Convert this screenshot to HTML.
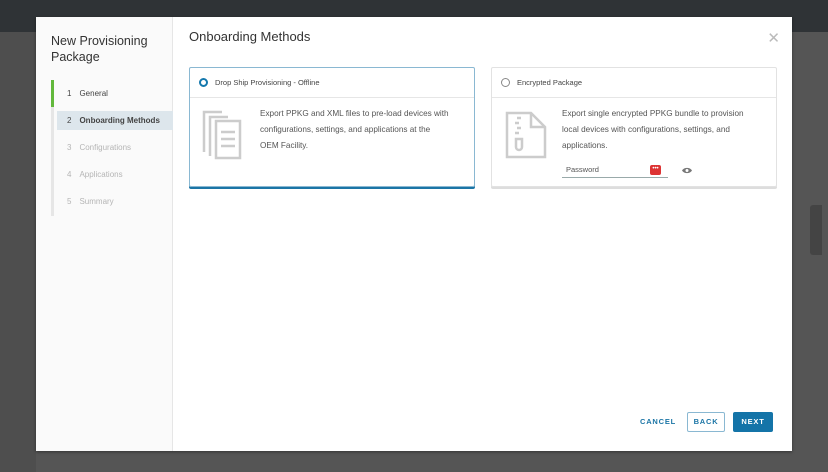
<!DOCTYPE html>
<html><head><style>
*{box-sizing:border-box;margin:0;padding:0}
body{width:828px;height:472px;overflow:hidden;background:#555;font-family:"Liberation Sans",sans-serif;position:relative}
.top{position:absolute;left:0;top:0;width:828px;height:32px;background:#2f3336}
.side{position:absolute;left:0;top:32px;width:36px;height:440px;background:#4e4e4e}
.modal{position:absolute;left:36px;top:17px;width:756px;height:434px;background:#fff;box-shadow:0 1px 3px rgba(0,0,0,.4)}
.left{position:absolute;left:0;top:0;width:137px;height:434px;background:#fafafa;border-right:1px solid #e6e6e6}
.title{position:absolute;left:15px;top:16px;font-size:12.5px;line-height:16px;color:#333}
.track{position:absolute;left:15px;top:63px;width:3px;height:136px;background:#e6e6e6}
.track i{display:block;width:3px;height:27px;background:#62b83c}
.step{position:absolute;left:21px;width:116px;height:19px;font-size:8px;line-height:19px;color:#444;padding-left:10px}
.step b{font-weight:normal;margin-right:8px}
.dim{color:#b5b5b5}
h2{position:absolute;left:153px;top:12px;font-size:13px;font-weight:normal;color:#333}
.x{position:absolute;right:12px;top:12px;font-size:15px;color:#bbb}
.card{position:absolute;top:50px;width:286px;height:120px;border:1px solid #e2e2e2;border-radius:2px;box-shadow:0 2px 0 #ddd}
.card.sel{border-color:#8ab8d2;box-shadow:0 2px 0 #1b75a6}
.hd{height:30px;border-bottom:1px solid #e6e6e6;font-size:7.5px;color:#444;line-height:29px;padding-left:25px;position:relative}
.rad{position:absolute;left:9px;top:10px;width:9px;height:9px;border-radius:50%;border:1px solid #888}
.sel .rad{border:2.5px solid #1478ad;background:#fff}
.txt{position:absolute;left:70px;top:38px;font-size:8.2px;line-height:16px;color:#555;white-space:nowrap}
.btn{position:absolute;top:395px;height:20px;font-size:7.5px;font-weight:bold;letter-spacing:.8px;line-height:20px;text-align:center;color:#1b75a6;border-radius:2px}
</style></head><body>
<div class="top"></div><div class="side"></div>
<div style="position:absolute;right:6px;top:205px;width:12px;height:50px;background:#444;border-radius:3px 0 0 3px"></div>
<div class="modal">
 <div class="left">
  <div class="title">New Provisioning<br>Package</div>
  <div class="track"><i></i></div>
  <div class="step" style="top:67px"><b>1</b>General</div>
  <div class="step" style="top:94px;background:#dde6ec;font-weight:bold"><b>2</b>Onboarding Methods</div>
  <div class="step dim" style="top:121px"><b>3</b>Configurations</div>
  <div class="step dim" style="top:148px"><b>4</b>Applications</div>
  <div class="step dim" style="top:175px"><b>5</b>Summary</div>
 </div>
 <h2>Onboarding Methods</h2>
 <div class="x">✕</div>
 <div class="card sel" style="left:153px">
  <div class="hd"><span class="rad"></span>Drop Ship Provisioning - Offline</div>
  <svg style="position:absolute;left:12px;top:42px" width="44" height="50" viewBox="0 0 44 50" fill="none" stroke="#ccc" stroke-width="2.5">
   <path d="M2 42V2h18"/><path d="M8 46V7h18"/><path d="M14 11h24v37H14z"/><path d="M19 22h14M19 29h14M19 36h14"/></svg>
  <div class="txt">Export PPKG and XML files to pre-load devices with<br>configurations, settings, and applications at the<br>OEM Facility.</div>
 </div>
 <div class="card" style="left:455px">
  <div class="hd"><span class="rad"></span>Encrypted Package</div>
  <svg style="position:absolute;left:12px;top:42px" width="44" height="50" viewBox="0 0 44 50" fill="none" stroke="#ccc" stroke-width="2.5">
   <path d="M3 3h24l14 14v30H3z"/><path d="M27 3v14h14"/><path d="M13 8h4M11 13h4M13 18h4M11 23h4" stroke-width="2.5"/><path d="M12 29h6v8a3 3 0 0 1-6 0z"/></svg>
  <div class="txt">Export single encrypted PPKG bundle to provision<br>local devices with configurations, settings, and<br>applications.</div>
  <div style="position:absolute;left:70px;top:97px;width:106px;height:13px;border-bottom:1px solid #9aa;font-size:7.5px;color:#555;padding-left:4px">Password</div>
  <div style="position:absolute;left:158px;top:97px;width:11px;height:10px;background:#d33;border-radius:2px;color:#fff;font-size:6px;line-height:9px;text-align:center">•••</div>
  <svg style="position:absolute;left:190px;top:99px" width="10" height="7" viewBox="0 0 10 7"><path d="M0 3.5C2 0 8 0 10 3.5 8 7 2 7 0 3.5z" fill="#777"/><circle cx="5" cy="3.5" r="1.5" fill="#fff"/></svg>
 </div>
 <div class="btn" style="left:604px;width:36px">CANCEL</div>
 <div class="btn" style="left:651px;width:38px;border:1px solid #8ab8d2;line-height:18px">BACK</div>
 <div class="btn" style="left:697px;width:40px;background:#1474a8;color:#fff">NEXT</div>
</div>
</body></html>
